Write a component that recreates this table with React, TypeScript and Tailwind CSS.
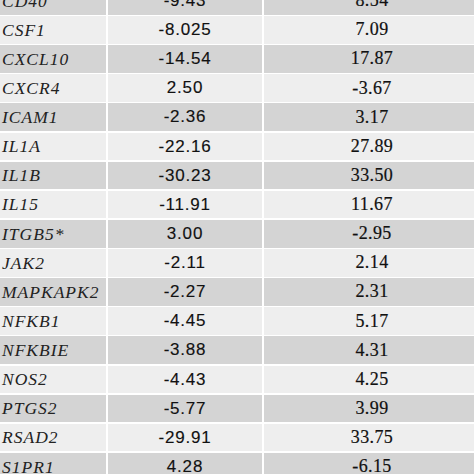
import React from "react";

const rows: [string, string, string][] = [
  ["CD40", "-9.43", "8.54"],
  ["CSF1", "-8.025", "7.09"],
  ["CXCL10", "-14.54", "17.87"],
  ["CXCR4", "2.50", "-3.67"],
  ["ICAM1", "-2.36", "3.17"],
  ["IL1A", "-22.16", "27.89"],
  ["IL1B", "-30.23", "33.50"],
  ["IL15", "-11.91", "11.67"],
  ["ITGB5*", "3.00", "-2.95"],
  ["JAK2", "-2.11", "2.14"],
  ["MAPKAPK2", "-2.27", "2.31"],
  ["NFKB1", "-4.45", "5.17"],
  ["NFKBIE", "-3.88", "4.31"],
  ["NOS2", "-4.43", "4.25"],
  ["PTGS2", "-5.77", "3.99"],
  ["RSAD2", "-29.91", "33.75"],
  ["S1PR1", "4.28", "-6.15"],
];

export default function App() {
  return (
    <div className="w-[474px] h-[474px] overflow-hidden bg-white relative">
      <div className="flex flex-col gap-[1.5px] mt-[-13.125px]">
        {rows.map(([g, a, b], i) => {
          const bg = i % 2 === 0 ? "bg-[#d4d4d4]" : "bg-[#eeeeee]";
          return (
            <div key={g} className="flex gap-[2px] h-[27.625px] shrink-0">
              <div
                className={`${bg} w-[106px] shrink-0 flex items-center pl-[2px] text-[17.5px] italic tracking-[1px] text-[#222222] whitespace-nowrap overflow-hidden`}
                style={{ fontFamily: '"Liberation Serif", serif' }}
              >
                {g}
              </div>
              <div
                className={`${bg} w-[154px] shrink-0 flex items-center justify-center text-[17px] tracking-[0.8px] text-[#111111] [-webkit-text-stroke:0.15px_#111111]`}
                style={{ fontFamily: '"Liberation Sans", Arial, sans-serif' }}
              >
                {a}
              </div>
              <div
                className={`${bg} w-[216px] shrink-0 flex items-center justify-center text-[18px] tracking-[0.4px] text-[#111111] [-webkit-text-stroke:0.2px_#111111]`}
                style={{ fontFamily: '"Liberation Serif", serif' }}
              >
                {b}
              </div>
            </div>
          );
        })}
      </div>
    </div>
  );
}
